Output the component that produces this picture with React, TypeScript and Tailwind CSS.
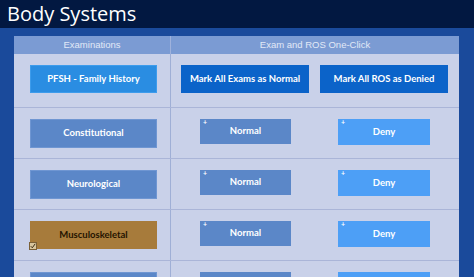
import React from "react";

const btnFont = { fontFamily: "Lato, 'Noto Sans', sans-serif" };

function Plus() {
  return (
    <span className="absolute left-[3px] top-[0px] text-[7px] leading-[7px] text-white font-bold">+</span>
  );
}

function ExamRow({ label, highlight, hideText }: { label: string; highlight?: boolean; hideText?: boolean }) {
  return (
    <div className="flex h-[51px] border-t border-[#aab5d8]">
      <div className="w-[157px] shrink-0 border-r border-[#9fafd6] pl-[16px] pt-[11px]">
        <div className="relative">
          {highlight ? (
            <div className="w-[127px] h-[28px] bg-[#a77b3b] flex items-center justify-center text-[9.5px] font-bold text-[#241400]" style={btnFont}>
              {label}
            </div>
          ) : (
            <div className="w-[127px] h-[29px] bg-[#5b87c8] flex items-center justify-center text-[9.5px] font-bold text-white border border-[#6f96d2]" style={btnFont}>
              {hideText ? null : label}
            </div>
          )}
          {highlight && (
            <div className="absolute left-[-1px] top-[21px] w-[8px] h-[8px] bg-[#d8c59e] border border-[#7a6038] flex items-center justify-center">
              <svg width="6" height="6" viewBox="0 0 6 6">
                <path d="M0.8 3.2 L2.3 4.8 L5.2 0.8" stroke="#3a2a10" strokeWidth="1" fill="none" />
              </svg>
            </div>
          )}
        </div>
      </div>
      <div className="flex-1 flex pt-[11px] pl-[29px]">
        <div className="relative w-[91px] h-[25px] bg-[#5b87c8] flex items-center justify-center text-[9.5px] font-bold text-white" style={btnFont}>
          {hideText ? null : <Plus />}
          {hideText ? null : "Normal"}
        </div>
        <div className="relative ml-[47px] w-[92px] h-[26px] bg-[#4d9ff6] flex items-center justify-center text-[9.5px] font-bold text-white" style={btnFont}>
          {hideText ? null : <Plus />}
          {hideText ? null : "Deny"}
        </div>
      </div>
    </div>
  );
}

export default function App() {
  return (
    <div className="w-[474px] h-[277px] overflow-hidden bg-[#1a4a9b]">
      <div className="h-[28px] bg-[#021841] flex items-center pl-[7px]">
        <span className="text-white text-[20px] leading-none" style={{ fontFamily: "'Open Sans', 'Noto Sans', sans-serif" }}>
          Body Systems
        </span>
      </div>
      <div className="pl-[14px] pr-[15px] pt-[8px]">
        <div className="bg-[#c9d1e9] h-[300px]">
          <div className="flex h-[18px] bg-[#7b9bd3] text-[#e2e9f7] text-[9.5px]" style={{ fontFamily: "'Liberation Sans', sans-serif" }}>
            <div className="w-[157px] shrink-0 border-r border-[#9fb2dc] flex items-center justify-center">Examinations</div>
            <div className="flex-1 flex items-center justify-center">Exam and ROS One-Click</div>
          </div>
          <div className="flex h-[53px]">
            <div className="w-[157px] shrink-0 border-r border-[#9fafd6] pl-[16px] pt-[11px]">
              <div className="w-[127px] h-[28px] bg-[#2a8de2] border border-[#3d9cec] flex items-center justify-center text-[9.5px] font-bold text-white" style={btnFont}>
                PFSH - Family History
              </div>
            </div>
            <div className="flex-1 flex pt-[11px] pl-[10px] gap-[11px]">
              <div className="w-[128px] h-[28px] bg-[#0b63c9] flex items-center justify-center text-[9.5px] font-bold text-white" style={btnFont}>
                Mark All Exams as Normal
              </div>
              <div className="w-[128px] h-[28px] bg-[#0b63c9] flex items-center justify-center text-[9.5px] font-bold text-white" style={btnFont}>
                Mark All ROS as Denied
              </div>
            </div>
          </div>
          <ExamRow label="Constitutional" />
          <ExamRow label="Neurological" />
          <ExamRow label="Musculoskeletal" highlight />
          <ExamRow label="Cardiovascular" hideText />
        </div>
      </div>
    </div>
  );
}
